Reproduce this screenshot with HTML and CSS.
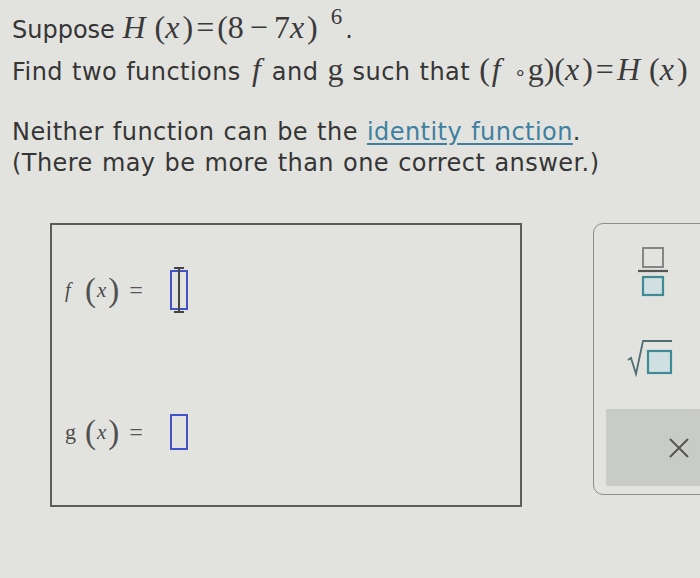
FILE: index.html
```html
<!DOCTYPE html>
<html>
<head>
<meta charset="utf-8">
<link rel="stylesheet" href="styles.css">
</head>
<body>
<div class="page">
  <div class="question">
    <div class="line l1">Suppose <span class="m"><i class="big">H</i><span class="gap"></span>(<i>x</i>)<span class="rel">=</span>(8<span class="op">−</span>7<i>x</i>)<sup class="exp">6</sup></span><span class="dot">.</span></div>
    <div class="line l2">Find two functions <span class="m"><i class="fi">f</i></span> and <span class="m">g</span> such that <span class="m">(<i class="fi">f</i> <span class="comp">∘</span>g)(<i>x</i>)<span class="rel">=</span><i class="big">H</i><span class="gap"></span>(<i>x</i>)</span></div>
    <div class="note">
      <div>Neither function can be the <a class="link">identity function</a>.</div>
      <div>(There may be more than one correct answer.)</div>
    </div>
  </div>
  <div class="work">
    <div class="answers">
      <div class="row row-f">
        <span class="lbl"><i class="fn">f</i><span class="par">(</span><i class="var">x</i><span class="par">)</span><span class="eq">=</span></span>
        <span class="slot slot-f">
          <svg class="cursor" width="12" height="46" viewBox="0 0 12 46"><path d="M1 1 H11 M6 1 V45 M1 45 H11" stroke="#444" stroke-width="2" fill="none"/></svg>
        </span>
      </div>
      <div class="row row-g">
        <span class="lbl"><i class="fn gfn">g</i><span class="par">(</span><i class="var">x</i><span class="par">)</span><span class="eq">=</span></span>
        <span class="slot slot-g"></span>
      </div>
    </div>
    <div class="palette">
      <svg class="frac" width="32" height="50" viewBox="0 0 32 50">
        <rect x="6" y="1" width="20" height="19" fill="none" stroke="#7a7d7d" stroke-width="1.8"/>
        <path d="M1 24 H31" stroke="#555" stroke-width="2.2"/>
        <rect x="6" y="30" width="20" height="18" fill="#cfdfe2" stroke="#3f8a95" stroke-width="2.2"/>
      </svg>
      <svg class="sqrt" width="48" height="38" viewBox="0 0 48 38">
        <path d="M2 21 L5 19 L10 35 L17 2 L46 2" fill="none" stroke="#4f6e73" stroke-width="1.8"/>
        <rect x="22" y="12" width="23" height="22" fill="#cfdfe2" stroke="#3f8a95" stroke-width="2.2"/>
      </svg>
      <div class="clear">
        <svg width="22" height="22" viewBox="0 0 22 22"><path d="M2 2 L20 20 M20 2 L2 20" stroke="#555" stroke-width="2"/></svg>
      </div>
    </div>
  </div>
</div>
</body>
</html>
```
FILE: styles.css
```css
html, body {
  margin: 0;
  padding: 0;
}
body {
  width: 700px;
  height: 578px;
  overflow: hidden;
  background: #e2e3df;
  font-family: "DejaVu Sans", Verdana, sans-serif;
  color: #353535;
}
.page {
  padding: 9px 0 0 12px;
}
.line {
  font-size: 24px;
  line-height: 42px;
  white-space: nowrap;
}
.l2 {
  letter-spacing: 0.45px;
  word-spacing: 1px;
}
.m {
  font-family: "Liberation Serif", "Times New Roman", serif;
  font-size: 32px;
  line-height: 1;
  color: #3a3a3a;
  letter-spacing: 0;
  word-spacing: 0;
}
.m i {
  font-style: italic;
  margin-right: 3px;
}
.m i.big {
  margin-right: 0;
}
.m i.fi {
  margin: 0 2px 0 2px;
}
.gap {
  display: inline-block;
  width: 9px;
}
.rel {
  margin: 0 3px;
}
.op {
  margin: 0 6px;
}
.comp {
  font-size: 20px;
  margin-left: 3px;
  margin-right: 1px;
}
.exp {
  font-size: 23px;
  line-height: 0;
  vertical-align: 14px;
  margin-left: 13px;
}
.dot {
  margin-left: 3px;
}
.note {
  margin-top: 24px;
  font-size: 24px;
  line-height: 31px;
  white-space: nowrap;
  letter-spacing: 0.45px;
  word-spacing: 1px;
}
.link {
  color: #3f7f9f;
  text-decoration: underline;
  text-underline-offset: 3px;
}
.work {
  display: flex;
  margin-top: 44px;
  margin-left: 38px;
}
.answers {
  flex: none;
  width: 472px;
  height: 284px;
  box-sizing: border-box;
  border: 2px solid #5c5c5c;
  padding: 45px 0 0 13px;
  display: flex;
  flex-direction: column;
  gap: 104px;
}
.row {
  display: flex;
  align-items: center;
}
.row-f {
  height: 40px;
}
.row-g {
  height: 36px;
}
.lbl {
  width: 105px;
  display: flex;
  align-items: center;
  font-family: "Liberation Serif", "Times New Roman", serif;
  color: #4a4a4a;
}
.fn {
  font-size: 20px;
  width: 20px;
}
.gfn {
  font-style: normal;
  font-size: 22px;
}
.par {
  font-size: 33px;
  color: #505050;
}
.var {
  font-size: 21px;
  margin: 0 2px 0 1px;
}
.eq {
  font-size: 24px;
  margin-left: 10px;
  color: #555;
}
.slot {
  position: relative;
  width: 18px;
  box-sizing: border-box;
  border: 2px solid #4452c8;
}
.slot-f {
  height: 40px;
}
.slot-g {
  height: 36px;
}
.cursor {
  position: absolute;
  left: 1px;
  top: -5px;
}
.palette {
  flex: none;
  margin-left: 71px;
  width: 150px;
  height: 272px;
  box-sizing: border-box;
  border: 1.5px solid #8c8e8c;
  border-radius: 10px;
  padding-top: 23px;
  display: flex;
  flex-direction: column;
  align-items: flex-start;
}
.frac {
  margin-left: 43px;
}
.sqrt {
  margin-left: 32px;
  margin-top: 42px;
}
.clear {
  margin-top: 32px;
  margin-left: 12px;
  width: 136px;
  height: 77px;
  background: #c9cbc7;
  display: flex;
  align-items: center;
  padding-left: 62px;
  box-sizing: border-box;
}
```
